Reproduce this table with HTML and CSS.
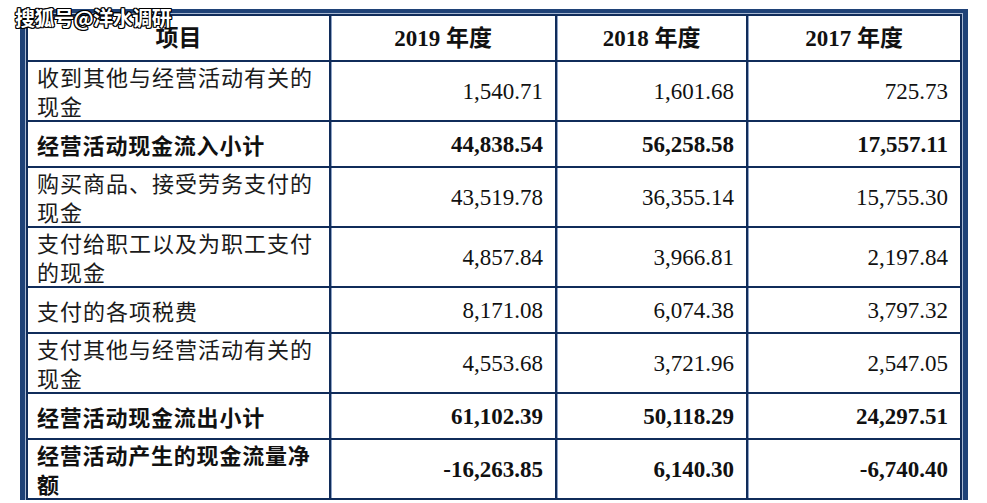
FILE: index.html
```html
<!DOCTYPE html>
<html lang="zh-CN">
<head>
<meta charset="utf-8">
<link rel="stylesheet" href="styles.css">
</head>
<body>
<div class="frame">
  <table class="cf">
    <colgroup>
      <col class="c1"><col class="c2"><col class="c3"><col class="c4">
    </colgroup>
    <tr class="head">
      <th>项目</th><th>2019 年度</th><th>2018 年度</th><th>2017 年度</th>
    </tr>
    <tr class="two">
      <td class="lbl">收到其他与经营活动有关的现金</td><td>1,540.71</td><td>1,601.68</td><td>725.73</td>
    </tr>
    <tr class="one bold">
      <td class="lbl">经营活动现金流入小计</td><td>44,838.54</td><td>56,258.58</td><td>17,557.11</td>
    </tr>
    <tr class="two">
      <td class="lbl">购买商品、接受劳务支付的现金</td><td>43,519.78</td><td>36,355.14</td><td>15,755.30</td>
    </tr>
    <tr class="two">
      <td class="lbl">支付给职工以及为职工支付的现金</td><td>4,857.84</td><td>3,966.81</td><td>2,197.84</td>
    </tr>
    <tr class="one">
      <td class="lbl">支付的各项税费</td><td>8,171.08</td><td>6,074.38</td><td>3,797.32</td>
    </tr>
    <tr class="two">
      <td class="lbl">支付其他与经营活动有关的现金</td><td>4,553.68</td><td>3,721.96</td><td>2,547.05</td>
    </tr>
    <tr class="one bold">
      <td class="lbl">经营活动现金流出小计</td><td>61,102.39</td><td>50,118.29</td><td>24,297.51</td>
    </tr>
    <tr class="two bold">
      <td class="lbl">经营活动产生的现金流量净额</td><td>-16,263.85</td><td>6,140.30</td><td>-6,740.40</td>
    </tr>
  </table>
</div>
<div class="mark">搜狐号@洋水调研</div>
</body>
</html>
```

FILE: styles.css
```css
html, body {
  margin: 0;
  padding: 0;
  background: #ffffff;
  overflow: hidden;
}

body {
  font-family: "Liberation Serif", "Noto Sans CJK SC", serif;
  color: #111;
}

.frame {
  width: 936px;
  margin: 9px 0 0 20px;
  border-style: solid;
  border-color: #1f4277;
  border-width: 4px 5px 0 5px;
  padding: 1px 1px 0 1px;
  background: #a8b8d2;
}

.cf {
  width: 934px;
  table-layout: fixed;
  border-collapse: collapse;
  background: #fff;
  border: 2px solid #102c5a;
}

.c1 { width: 303px; }
.c2 { width: 226px; }
.c3 { width: 191px; }
.c4 { width: 214px; }

.cf th,
.cf td {
  border: 2px solid #102c5a;
  padding: 0 12px 0 9px;
  font-size: 23px;
  line-height: 29px;
  text-align: right;
  vertical-align: middle;
  white-space: normal;
}

.cf th + th,
.cf td + td {
  box-shadow: inset 1px 0 0 #8ea3c6;
}

.cf th {
  text-align: center;
  font-weight: bold;
  height: 44px;
  padding: 0;
}

.cf td.lbl {
  text-align: left;
  font-family: "Noto Sans CJK SC", sans-serif;
  font-size: 22px;
  letter-spacing: 1px;
  line-height: 29px;
  color: #1a1a1a;
}

.two td { height: 58px; }
.one td { height: 44px; }

.bold td { font-weight: bold; }
.bold td.lbl { font-weight: bold; color: #111; letter-spacing: 0.8px; }

.mark {
  position: absolute;
  left: 15px;
  top: 5px;
  font-family: "Noto Sans CJK SC", sans-serif;
  font-size: 20px;
  font-weight: bold;
  line-height: 26px;
  color: #ffffff;
  letter-spacing: -0.5px;
  text-shadow: -1px -1px 0 #000, 1px -1px 0 #000, -1px 1px 0 #000, 1px 1px 0 #000, 0 1px 0 #000, 0 -1px 0 #000, 1px 0 0 #000, -1px 0 0 #000;
}
```
